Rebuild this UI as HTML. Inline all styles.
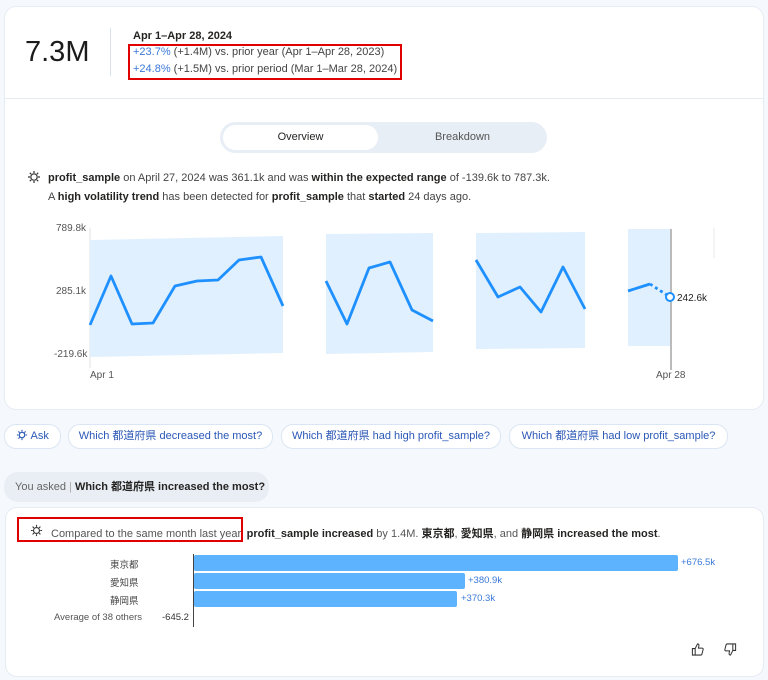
<!DOCTYPE html>
<html><head><meta charset="utf-8"><style>
*{margin:0;padding:0;box-sizing:border-box}
body{width:768px;height:680px;background:#f5f8fc;font-family:"Liberation Sans","Noto Sans CJK JP",sans-serif;color:#252423;position:relative;overflow:hidden;font-size:11px}
.a{position:absolute;white-space:nowrap}
.card{position:absolute;background:#fff;border:1px solid #e6ecf4;border-radius:12px}
b{font-weight:bold}
.pill{position:absolute;white-space:nowrap;height:25px;border:1px solid #dbe6f4;border-radius:12px;background:#fff;color:#2a57b6;font-size:11px;line-height:23px;padding:0}
.blue{color:#3b79d8}
.red{position:absolute;border:2px solid #e00000}
</style></head><body>
<div class="card" style="left:4px;top:6px;width:760px;height:404px"></div>
<div class="a" style="left:5px;top:98px;width:758px;border-top:1px solid #e6ecf4"></div>
<div class="a" style="left:25px;top:36px;font-size:29px;color:#1b1b1b">7.3M</div>
<div class="a" style="left:110px;top:28px;height:48px;border-left:1px solid #d8e2ee"></div>
<div class="a" style="left:133px;top:30px;font-size:11px;font-weight:bold">Apr 1–Apr 28, 2024</div>
<div class="a" style="left:133px;top:46px;font-size:11px;color:#444"><span class="blue">+23.7%</span> (+1.4M) vs. prior year (Apr 1–Apr 28, 2023)</div>
<div class="a" style="left:133px;top:63px;font-size:11px;color:#444"><span class="blue">+24.8%</span> (+1.5M) vs. prior period (Mar 1–Mar 28, 2024)</div>
<div class="red" style="left:128px;top:44px;width:274px;height:36px"></div>

<div class="a" style="left:220px;top:122px;width:327px;height:31px;border-radius:16px;background:#e8eef5"></div>
<div class="a" style="left:223px;top:125px;width:155px;height:25px;border-radius:13px;background:#fff;text-align:center;line-height:25px;font-size:11px">Overview</div>
<div class="a" style="left:380px;top:125px;width:165px;height:25px;text-align:center;line-height:25px;font-size:11px;color:#555">Breakdown</div>

<svg class="a" style="left:27px;top:170px" width="14" height="14" viewBox="0 0 14 14" fill="none" stroke="#333" stroke-width="1.2"><circle cx="7" cy="7" r="3.2"/><path d="M7 1v2M7 11v2M1 7h2M11 7h2M2.8 2.8l1.4 1.4M9.8 9.8l1.4 1.4M2.8 11.2l1.4-1.4M9.8 4.2l1.4-1.4"/></svg>
<div class="a" style="left:48px;top:172px;color:#444"><b style="color:#252423">profit_sample</b> on April 27, 2024 was 361.1k and was <b style="color:#252423">within the expected range</b> of -139.6k to 787.3k.</div>
<div class="a" style="left:48px;top:191px;color:#444">A <b style="color:#252423">high volatility trend</b> has been detected for <b style="color:#252423">profit_sample</b> that <b style="color:#252423">started</b> 24 days ago.</div>

<div class="a" style="left:56px;top:223px;font-size:10px;color:#555">789.8k</div>
<div class="a" style="left:56px;top:286px;font-size:10px;color:#555">285.1k</div>
<div class="a" style="left:54px;top:349px;font-size:10px;color:#555">-219.6k</div>
<div class="a" style="left:90px;top:370px;font-size:10px;color:#555">Apr 1</div>
<div class="a" style="left:656px;top:370px;font-size:10px;color:#555">Apr 28</div>
<svg class="a" style="left:0;top:0" width="768" height="400">
<line x1="90" y1="228" x2="90" y2="368" stroke="#e0e0e0"/>
<line x1="714" y1="228" x2="714" y2="258" stroke="#e8e8e8"/>
<polygon points="90,240 283,236 283,353 90,357" fill="#e1f0fe"/>
<polygon points="326,234 433,233 433,352 326,354" fill="#e1f0fe"/>
<polygon points="476,233 585,232 585,348 476,349" fill="#e1f0fe"/>
<polygon points="628,229 670,229 670,346 628,346" fill="#e1f0fe"/>
<line x1="671" y1="229" x2="671" y2="370" stroke="#777"/>
<g fill="none" stroke="#1e90ff" stroke-width="2.8" stroke-linejoin="round">
<polyline points="90,325 111,276 132,324 153,323 175,286 197,281 218,280 239,260 261,257 283,306"/>
<polyline points="326,281 347,324 369,268 390,262 412,310 433,321"/>
<polyline points="476,260 498,297 520,287 541,312 563,267 585,309"/>
<polyline points="628,291 650,284"/>
<polyline points="650,284 670,297" stroke-dasharray="3,3"/>
</g>
<circle cx="670" cy="297" r="4" fill="#fff" stroke="#1e90ff" stroke-width="2"/>
<text x="677" y="301" font-size="10" fill="#222" font-family="Liberation Sans">242.6k</text>
</svg>

<div class="pill" style="left:4px;top:424px;width:57px;text-align:center"><svg width="12" height="12" viewBox="0 0 14 14" fill="none" stroke="#2a57b6" stroke-width="1.3" style="vertical-align:-2px"><circle cx="7" cy="7" r="3.2"/><path d="M7 1v2M7 11v2M1 7h2M11 7h2M2.8 2.8l1.4 1.4M2.8 11.2l1.4-1.4M9.8 4.2l1.4-1.4"/></svg> Ask</div>
<div class="pill" style="left:68px;top:424px;width:205px;text-align:center">Which 都道府県 decreased the most?</div>
<div class="pill" style="left:281px;top:424px;width:220px;text-align:center">Which 都道府県 had high profit_sample?</div>
<div class="pill" style="left:509px;top:424px;width:219px;text-align:center">Which 都道府県 had low profit_sample?</div>

<div class="a" style="left:4px;top:472px;width:265px;height:30px;border-radius:14px;background:#e9eef4;line-height:30px;padding-left:11px;font-size:11px;color:#666">You asked <span style="color:#aaa">|</span> <b style="color:#252423">Which 都道府県 increased the most?</b></div>

<div class="card" style="left:5px;top:507px;width:759px;height:170px"></div>
<svg class="a" style="left:30px;top:524px" width="13" height="13" viewBox="0 0 14 14" fill="none" stroke="#333" stroke-width="1.2"><circle cx="7" cy="7" r="3.2"/><path d="M7 1v2M7 11v2M1 7h2M11 7h2M2.8 2.8l1.4 1.4M9.8 9.8l1.4 1.4M2.8 11.2l1.4-1.4M9.8 4.2l1.4-1.4"/></svg>
<div class="a" style="left:51px;top:525px;color:#555">Compared to the same month last year, <b style="color:#252423">profit_sample increased</b> by 1.4M. <b style="color:#252423">東京都</b>, <b style="color:#252423">愛知県</b>, and <b style="color:#252423">静岡県</b> <b style="color:#252423">increased the most</b>.</div>
<div class="red" style="left:17px;top:517px;width:226px;height:25px"></div>

<div class="a" style="left:193px;top:554px;height:73px;border-left:1.5px solid #444"></div>
<div class="a" style="left:194px;top:555px;width:484px;height:16px;background:#5db3fe;border-radius:2px"></div>
<div class="a" style="left:194px;top:573px;width:271px;height:16px;background:#5db3fe;border-radius:2px"></div>
<div class="a" style="left:194px;top:591px;width:263px;height:16px;background:#5db3fe;border-radius:2px"></div>
<div class="a" style="left:110px;top:557px;font-size:9.5px;color:#444">東京都</div>
<div class="a" style="left:110px;top:575px;font-size:9.5px;color:#444">愛知県</div>
<div class="a" style="left:110px;top:593px;font-size:9.5px;color:#444">静岡県</div>
<div class="a" style="left:54px;top:612px;font-size:9.5px;color:#555">Average of 38 others</div>
<div class="a" style="left:162px;top:612px;font-size:9.5px;color:#333">-645.2</div>
<div class="a" style="left:681px;top:557px;font-size:9.5px;color:#3b79d8">+676.5k</div>
<div class="a" style="left:468px;top:575px;font-size:9.5px;color:#3b79d8">+380.9k</div>
<div class="a" style="left:461px;top:593px;font-size:9.5px;color:#3b79d8">+370.3k</div>

<svg class="a" style="left:691px;top:643px" width="13" height="13" viewBox="0 0 14 14" fill="none" stroke="#333" stroke-width="1.1"><path d="M1.5 6h3v7h-3zM4.5 6l2.5-5c1.2 0 1.8.8 1.5 2L8 5.5h4c.8 0 1.3.7 1.1 1.4l-1.3 5c-.2.7-.7 1.1-1.4 1.1H4.5"/></svg>
<svg class="a" style="left:724px;top:643px" width="13" height="13" viewBox="0 0 14 14" fill="none" stroke="#333" stroke-width="1.1"><g transform="rotate(180 7 7)"><path d="M1.5 6h3v7h-3zM4.5 6l2.5-5c1.2 0 1.8.8 1.5 2L8 5.5h4c.8 0 1.3.7 1.1 1.4l-1.3 5c-.2.7-.7 1.1-1.4 1.1H4.5"/></g></svg>
</body></html>
